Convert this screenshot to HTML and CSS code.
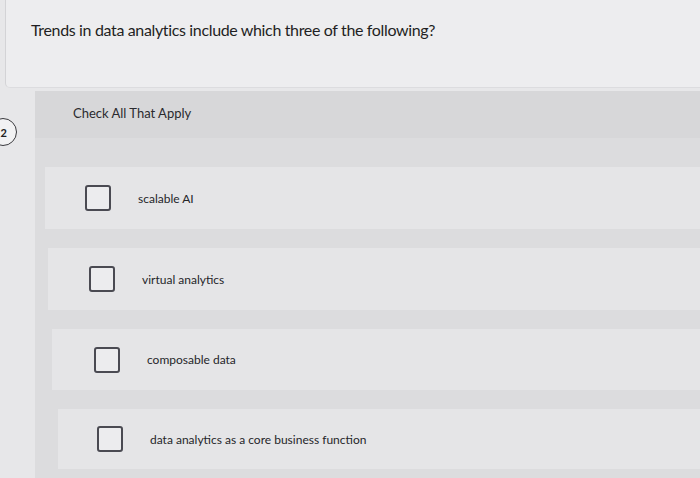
FILE: index.html
```html
<!DOCTYPE html>
<html>
<head>
<meta charset="utf-8">
<link rel="stylesheet" href="styles.css">
</head>
<body>
<div class="page">
  <div class="question">
    <p class="prompt">Trends in data analytics include which three of the following?</p>
  </div>
  <div class="badge"><span>2</span></div>
  <div class="section">
    <div class="header">Check All That Apply</div>
    <div class="options">
      <label class="option o1"><span class="box"></span><span class="text">scalable AI</span></label>
      <label class="option o2"><span class="box"></span><span class="text">virtual analytics</span></label>
      <label class="option o3"><span class="box"></span><span class="text">composable data</span></label>
      <label class="option o4"><span class="box"></span><span class="text">data analytics as a core business function</span></label>
    </div>
  </div>
</div>
</body>
</html>
```
FILE: styles.css
```css
html, body {
  margin: 0;
  padding: 0;
}
body {
  width: 700px;
  height: 478px;
  overflow: hidden;
  background: #e7e7e9;
  font-family: Lato, "Open Sans", Arial, sans-serif;
  color: #2a2a2e;
}
.page {
  position: relative;
  height: 478px;
}
.question {
  margin-left: 5px;
  height: 88px;
  box-sizing: border-box;
  border-left: 1px solid #d3d3d6;
  border-bottom: 1px solid #dcdcdf;
  border-bottom-left-radius: 5px;
  background: #ededef;
  padding: 20px 0 0 25px;
}
.prompt {
  margin: 0;
  font-size: 16px;
  letter-spacing: -0.35px;
  color: #1f1f23;
}
.badge {
  position: absolute;
  left: -11px;
  top: 118px;
  width: 28px;
  height: 28px;
  border: 1.5px solid #3a3a3e;
  border-radius: 50%;
  background: #f2f2f3;
  display: flex;
  align-items: center;
  justify-content: flex-end;
  box-sizing: border-box;
  padding-right: 9px;
  font-size: 11px;
  font-weight: bold;
  color: #222;
}
.section {
  margin: 3px 0 0 35px;
  background: #dcdcde;
  height: 387px;
}
.header {
  height: 47px;
  box-sizing: border-box;
  background: #d7d7d9;
  padding: 14px 0 0 38px;
  font-size: 13px;
  color: #2a2a2e;
}
.options {
  display: flex;
  flex-direction: column;
  gap: 19px;
  padding-top: 29px;
}
.option {
  display: flex;
  align-items: center;
  height: 62px;
  background: #e5e5e7;
  font-size: 12px;
  color: #26262a;
}
.box {
  width: 26px;
  height: 26px;
  box-sizing: border-box;
  border: 2px solid #4a4a52;
  border-radius: 3px;
  background: #ececee;
  flex: none;
}
.text {
  margin-left: 27px;
}
.o1 { margin-left: 10px; padding-left: 40px; }
.o2 { margin-left: 13px; padding-left: 41px; }
.o3 { margin-left: 17px; padding-left: 42px; height: 61px; }
.o4 { margin-left: 23px; padding-left: 39px; height: 60px; }
```
